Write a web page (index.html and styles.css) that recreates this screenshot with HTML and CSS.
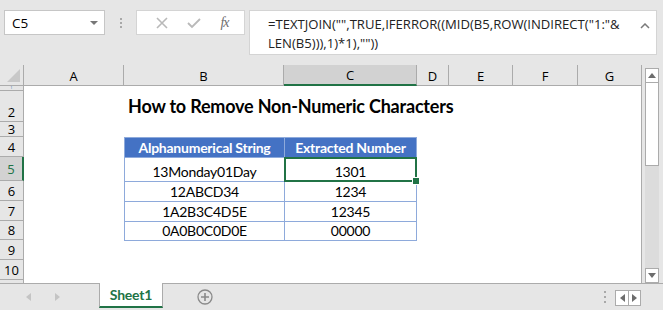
FILE: index.html
```html
<!DOCTYPE html>
<html lang="en">
<head>
  <meta charset="UTF-8">
  <title>Remove Non-Numeric Characters</title>
  <link rel="stylesheet" href="styles.css">
</head>
<body>
  <div class="toolbar">
    <div class="name-box">
      <span>C5</span>
      <span class="drop"></span>
    </div>
    <div class="grip"><i></i><i></i><i></i></div>
    <div class="fx-buttons">
      <svg width="12" height="12" viewBox="0 0 12 12"><path d="M1 1L11 11M11 1L1 11" stroke="#b9b9b9" stroke-width="1.6" fill="none"/></svg>
      <svg width="14" height="12" viewBox="0 0 14 12"><path d="M1 6L5 10L13 2" stroke="#b9b9b9" stroke-width="1.8" fill="none"/></svg>
      <span class="fx">fx</span>
    </div>
    <div class="formula">
      <div class="formula-text">=TEXTJOIN("",TRUE,IFERROR((MID(B5,ROW(INDIRECT("1:"&amp;<br>LEN(B5))),1)*1),""))</div>
      <svg class="caret" width="10" height="6" viewBox="0 0 10 6"><path d="M1 5L5 1L9 5" stroke="#7a7a7a" stroke-width="1.5" fill="none"/></svg>
    </div>
  </div>

  <div class="main">
    <div class="sheet">
      <div class="corner"><span class="tri"></span></div>
      <div class="col-head">A</div>
      <div class="col-head">B</div>
      <div class="col-head active">C</div>
      <div class="col-head">D</div>
      <div class="col-head">E</div>
      <div class="col-head">F</div>
      <div class="col-head">G</div>

      <div class="row-head r1"><span>1</span></div>
      <div class="row-head r2">2</div>
      <div class="row-head r3">3</div>
      <div class="row-head r4">4</div>
      <div class="row-head r5 active">5</div>
      <div class="row-head r6">6</div>
      <div class="row-head r7">7</div>
      <div class="row-head r8">8</div>
      <div class="row-head r9">9</div>
      <div class="row-head r10">10</div>
      <div class="row-head r11"></div>

      <div class="title">How to Remove Non-Numeric Characters</div>

      <table class="data">
        <tr class="hdr"><th>Alphanumerical String</th><th>Extracted Number</th></tr>
        <tr class="tall"><td>13Monday01Day</td><td class="selected">1301</td></tr>
        <tr><td>12ABCD34</td><td>1234</td></tr>
        <tr><td>1A2B3C4D5E</td><td>12345</td></tr>
        <tr class="short"><td>0A0B0C0D0E</td><td>00000</td></tr>
      </table>
    </div>

    <div class="vscroll">
      <div class="sbtn"><svg width="8" height="5" viewBox="0 0 8 5"><path d="M0 5L4 0L8 5Z" fill="#6d6d6d"/></svg></div>
      <div class="thumb"></div>
      <div class="track"></div>
      <div class="sbtn"><svg width="8" height="5" viewBox="0 0 8 5"><path d="M0 0L4 5L8 0Z" fill="#6d6d6d"/></svg></div>
    </div>
  </div>

  <div class="tabbar">
    <div class="nav">
      <svg width="5" height="8" viewBox="0 0 5 8"><path d="M5 0L0 4L5 8Z" fill="#c4c4c4"/></svg>
      <svg width="5" height="8" viewBox="0 0 5 8"><path d="M0 0L5 4L0 8Z" fill="#c4c4c4"/></svg>
    </div>
    <div class="tab">Sheet1</div>
    <svg class="add" width="16" height="16" viewBox="0 0 16 16"><circle cx="8" cy="8" r="7" stroke="#8a8a8a" stroke-width="1.3" fill="none"/><path d="M8 4V12M4 8H12" stroke="#8a8a8a" stroke-width="1.6"/></svg>
    <div class="spacer"></div>
    <div class="grip small"><i></i><i></i><i></i></div>
    <div class="hbtns">
      <span><svg width="5" height="8" viewBox="0 0 5 8"><path d="M5 0L0 4L5 8Z" fill="#6d6d6d"/></svg></span>
      <span><svg width="5" height="8" viewBox="0 0 5 8"><path d="M0 0L5 4L0 8Z" fill="#6d6d6d"/></svg></span>
    </div>
  </div>
</body>
</html>
```

FILE: styles.css
```css
* {
  box-sizing: border-box;
}

body {
  margin: 0;
  width: 663px;
  height: 310px;
  overflow: hidden;
  background: #e6e6e6;
  font-family: "Open Sans", "Noto Sans", sans-serif;
  color: #000;
}

/* formula bar */
.toolbar {
  height: 65px;
  display: flex;
  align-items: flex-start;
  padding: 10px 6px 0 4px;
}

.name-box {
  width: 101px;
  height: 25px;
  background: #fff;
  border: 1px solid #c6c6c6;
  display: flex;
  align-items: center;
  justify-content: space-between;
  padding: 0 6px 0 7px;
  font-size: 13.5px;
}

.drop {
  width: 0;
  height: 0;
  border-left: 4px solid transparent;
  border-right: 4px solid transparent;
  border-top: 4px solid #777;
}

.grip {
  width: 31px;
  height: 25px;
  display: flex;
  flex-direction: column;
  align-items: center;
  justify-content: center;
  gap: 2px;
}

.grip i {
  width: 2px;
  height: 2px;
  background: #a8a8a8;
}

.fx-buttons {
  width: 109px;
  height: 25px;
  background: #fff;
  border: 1px solid #d4d4d4;
  display: flex;
  align-items: center;
  justify-content: space-around;
  padding: 0 6px 0 10px;
}

.fx {
  font-family: "Liberation Serif", serif;
  font-style: italic;
  font-size: 14px;
  color: #6e6e6e;
  letter-spacing: -1px;
}

.formula {
  margin-left: 4px;
  flex: 1;
  height: 45px;
  background: #fff;
  border: 1px solid #d4d4d4;
  display: flex;
  justify-content: space-between;
  padding: 4px 6px 0 18px;
}

.formula-text {
  font-size: 13.1px;
  line-height: 19px;
  color: #222;
}

.caret {
  margin-top: 8px;
}

/* sheet */
.main {
  display: flex;
  height: 218px;
}

.sheet {
  width: 642px;
  display: grid;
  grid-template-columns: 24px 100px 160px 133px 32px 64px 65px 64px;
  grid-template-rows: 21px 5px 31px 15px 20px 24px 20px 20px 19px 20px 20px 3px;
  background: #fff;
}

.corner {
  grid-row: 1;
  grid-column: 1;
  background: #e6e6e6;
  border-right: 1px solid #ababab;
  border-bottom: 1px solid #ababab;
  display: flex;
  align-items: flex-end;
  justify-content: flex-end;
  padding: 0 3px 3px 0;
}

.tri {
  width: 0;
  height: 0;
  border-left: 13px solid transparent;
  border-bottom: 13px solid #c8c8c8;
}

.col-head {
  grid-row: 1;
  background: #e6e6e6;
  border-right: 1px solid #ababab;
  border-bottom: 1px solid #ababab;
  font-size: 13px;
  text-align: center;
  line-height: 20px;
  padding-top: 1px;
}

.col-head.active {
  background: #d2d2d2;
  border-bottom: 2px solid #217346;
  line-height: 18px;
}

.row-head {
  grid-column: 1;
  background: #e6e6e6;
  border-right: 1px solid #ababab;
  border-bottom: 1px solid #ababab;
  font-size: 13px;
  display: flex;
  align-items: flex-end;
  justify-content: center;
  line-height: 18px;
}

.row-head.r1 { grid-row: 2; align-items: flex-start; overflow: hidden; }
.row-head.r1 span { font-size: 4px; line-height: 4px; color: #3a6fb0; }
.row-head.r2 { grid-row: 3; }
.row-head.r3 { grid-row: 4; line-height: 14px; }
.row-head.r4 { grid-row: 5; }
.row-head.r5 { grid-row: 6; }
.row-head.r6 { grid-row: 7; }
.row-head.r7 { grid-row: 8; }
.row-head.r8 { grid-row: 9; line-height: 17px; }
.row-head.r9 { grid-row: 10; }
.row-head.r10 { grid-row: 11; }
.row-head.r11 { grid-row: 12; border-bottom: none; }

.row-head.active {
  background: #d2d2d2;
  border-right: 2px solid #217346;
  color: #217346;
  line-height: 22px;
}

.title {
  grid-row: 3;
  grid-column: 3 / 9;
  align-self: end;
  padding: 0 0 5px 4px;
  font-family: Lato, "Open Sans", sans-serif;
  font-weight: bold;
  font-size: 18px;
  letter-spacing: -0.2px;
  white-space: nowrap;
}

.sheet::after {
  content: "";
  grid-row: 2 / 13;
  grid-column: 8;
  border-right: 1px solid #ababab;
}

/* data table */
.data {
  grid-row: 5 / 10;
  grid-column: 3 / 5;
  width: 293px;
  border-collapse: collapse;
  font-family: Lato, "Open Sans", sans-serif;
  font-size: 14px;
  letter-spacing: -0.25px;
  align-self: start;
}

.data th,
.data td {
  border: 1px solid #8eaadb;
  padding: 0;
  text-align: center;
  height: 20px;
  line-height: 18px;
}

.data th:first-child,
.data td:first-child {
  width: 160px;
}

.data th {
  background: #4472c4;
  color: #fff;
  font-weight: bold;
}

.data tr.tall td {
  height: 24px;
  padding-top: 4px;
}

.data tr.short td {
  height: 19px;
}

.data td.selected {
  position: relative;
}

.data td.selected::after {
  content: "";
  position: absolute;
  left: -1px;
  top: -1px;
  right: -1px;
  bottom: -1px;
  border: 2px solid #217346;
}

.data td.selected::before {
  content: "";
  position: absolute;
  right: -4px;
  bottom: -4px;
  width: 6px;
  height: 6px;
  background: #217346;
  border: 1px solid #fff;
  z-index: 1;
}

/* vertical scrollbar */
.vscroll {
  width: 21px;
  display: flex;
  flex-direction: column;
  padding: 3px 4px 0 3px;
  background: #e6e6e6;
}

.sbtn {
  height: 15px;
  background: #fff;
  border: 1px solid #ababab;
  display: flex;
  align-items: center;
  justify-content: center;
}

.thumb {
  height: 83px;
  background: #fff;
  border: 1px solid #ababab;
  border-top: none;
}

.track {
  flex: 1;
  background: #dcdcdc;
}

/* sheet tabs */
.tabbar {
  height: 27px;
  display: flex;
  align-items: flex-start;
  border-top: 1px solid #ababab;
  padding-right: 22px;
}

.nav {
  width: 99px;
  display: flex;
  gap: 24px;
  padding: 9px 0 0 26px;
}

.tab {
  width: 64px;
  height: 25px;
  margin-top: -1px;
  background: #fff;
  border: 1px solid #ababab;
  border-top: none;
  border-bottom: 2px solid #217346;
  color: #217346;
  font-family: Lato, "Open Sans", sans-serif;
  font-weight: bold;
  font-size: 14px;
  letter-spacing: -0.2px;
  text-align: center;
  line-height: 24px;
}

.add {
  margin: 5px 0 0 34px;
}

.spacer {
  flex: 1;
}

.grip.small {
  width: 14px;
  height: 18px;
  margin-top: 4px;
  gap: 3px;
}

.hbtns {
  display: flex;
  margin: 6px 0 0 3px;
  border: 1px solid #ababab;
  background: #fff;
}

.hbtns span {
  width: 12px;
  height: 14px;
  display: flex;
  align-items: center;
  justify-content: center;
}

.hbtns span + span {
  border-left: 1px solid #ababab;
}
```
